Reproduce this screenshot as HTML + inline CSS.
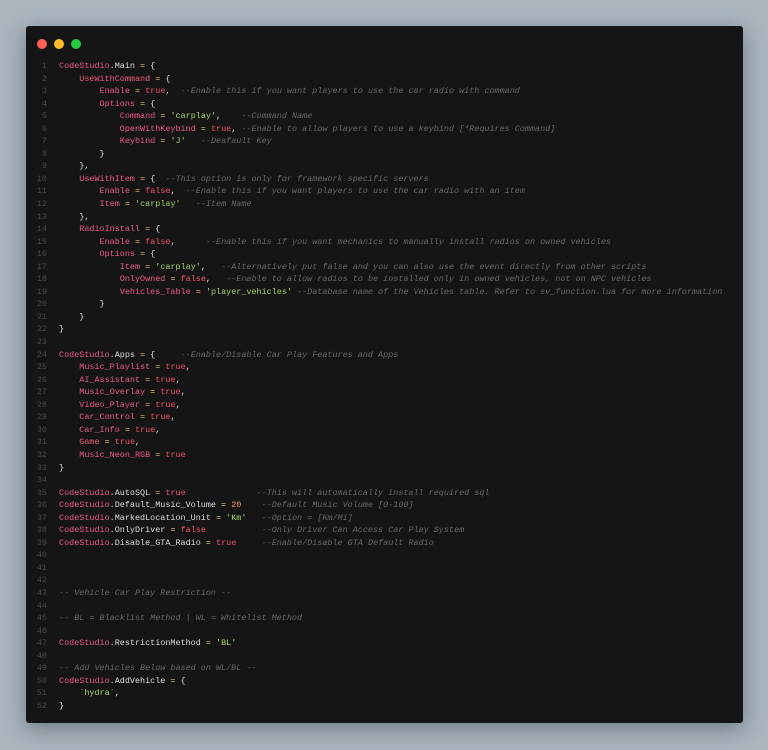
<!DOCTYPE html>
<html><head><meta charset="utf-8"><style>
html,body{margin:0;padding:0;width:768px;height:750px;overflow:hidden;background:#aab5be;}
.win{position:absolute;left:26px;top:26px;width:717px;height:697px;background:#151515;border-radius:3px;box-shadow:0 6px 22px rgba(40,50,60,.45);}
.dot{position:absolute;top:13px;width:10px;height:10px;border-radius:50%;}
pre{position:absolute;left:0;top:34px;margin:0;font-family:"Liberation Mono",monospace;font-size:8.45px;line-height:12.55px;color:#dcdcdc;}
.ln{display:inline-block;width:21px;text-align:right;color:#4a4a4a;margin-right:12px;}
.k{color:#ec5b83}.o{color:#e2bd6e}.b{color:#f0506c}.s{color:#a8d46a}.c{color:#676767;font-style:italic}.n{color:#f5995a}
</style></head><body>
<div class="win">
<div class="dot" style="left:11px;background:#fe5f57"></div>
<div class="dot" style="left:28px;background:#febc2e"></div>
<div class="dot" style="left:45px;background:#28c840"></div>
<pre><span class="ln">1</span><span class="k">CodeStudio</span>.Main <span class="o">=</span> {
<span class="ln">2</span>    <span class="k">UseWithCommand</span> <span class="o">=</span> {
<span class="ln">3</span>        <span class="k">Enable</span> <span class="o">=</span> <span class="b">true</span>,  <span class="c">--Enable this if you want players to use the car radio with command</span>
<span class="ln">4</span>        <span class="k">Options</span> <span class="o">=</span> {
<span class="ln">5</span>            <span class="k">Command</span> <span class="o">=</span> <span class="s">'carplay'</span>,    <span class="c">--Command Name</span>
<span class="ln">6</span>            <span class="k">OpenWithKeybind</span> <span class="o">=</span> <span class="b">true</span>, <span class="c">--Enable to allow players to use a keybind [*Requires Command]</span>
<span class="ln">7</span>            <span class="k">Keybind</span> <span class="o">=</span> <span class="s">'J'</span>   <span class="c">--Deafault Key</span>
<span class="ln">8</span>        }
<span class="ln">9</span>    },
<span class="ln">10</span>    <span class="k">UseWithItem</span> <span class="o">=</span> {  <span class="c">--This option is only for framework specific servers</span>
<span class="ln">11</span>        <span class="k">Enable</span> <span class="o">=</span> <span class="b">false</span>,  <span class="c">--Enable this if you want players to use the car radio with an item</span>
<span class="ln">12</span>        <span class="k">Item</span> <span class="o">=</span> <span class="s">'carplay'</span>   <span class="c">--Item Name</span>
<span class="ln">13</span>    },
<span class="ln">14</span>    <span class="k">RadioInstall</span> <span class="o">=</span> {
<span class="ln">15</span>        <span class="k">Enable</span> <span class="o">=</span> <span class="b">false</span>,      <span class="c">--Enable this if you want mechanics to manually install radios on owned vehicles</span>
<span class="ln">16</span>        <span class="k">Options</span> <span class="o">=</span> {
<span class="ln">17</span>            <span class="k">Item</span> <span class="o">=</span> <span class="s">'carplay'</span>,   <span class="c">--Alternatively put false and you can also use the event directly from other scripts</span>
<span class="ln">18</span>            <span class="k">OnlyOwned</span> <span class="o">=</span> <span class="b">false</span>,   <span class="c">--Enable to allow radios to be installed only in owned vehicles, not on NPC vehicles</span>
<span class="ln">19</span>            <span class="k">Vehicles_Table</span> <span class="o">=</span> <span class="s">'player_vehicles'</span> <span class="c">--Database name of the Vehicles table. Refer to sv_function.lua for more information</span>
<span class="ln">20</span>        }
<span class="ln">21</span>    }
<span class="ln">22</span>}
<span class="ln">23</span>
<span class="ln">24</span><span class="k">CodeStudio</span>.Apps <span class="o">=</span> {     <span class="c">--Enable/Disable Car Play Features and Apps</span>
<span class="ln">25</span>    <span class="k">Music_Playlist</span> <span class="o">=</span> <span class="b">true</span>,
<span class="ln">26</span>    <span class="k">AI_Assistant</span> <span class="o">=</span> <span class="b">true</span>,
<span class="ln">27</span>    <span class="k">Music_Overlay</span> <span class="o">=</span> <span class="b">true</span>,
<span class="ln">28</span>    <span class="k">Video_Player</span> <span class="o">=</span> <span class="b">true</span>,
<span class="ln">29</span>    <span class="k">Car_Control</span> <span class="o">=</span> <span class="b">true</span>,
<span class="ln">30</span>    <span class="k">Car_Info</span> <span class="o">=</span> <span class="b">true</span>,
<span class="ln">31</span>    <span class="k">Game</span> <span class="o">=</span> <span class="b">true</span>,
<span class="ln">32</span>    <span class="k">Music_Neon_RGB</span> <span class="o">=</span> <span class="b">true</span>
<span class="ln">33</span>}
<span class="ln">34</span>
<span class="ln">35</span><span class="k">CodeStudio</span>.AutoSQL <span class="o">=</span> <span class="b">true</span>              <span class="c">--This will automatically install required sql</span>
<span class="ln">36</span><span class="k">CodeStudio</span>.Default_Music_Volume <span class="o">=</span> <span class="n">20</span>    <span class="c">--Default Music Volume [0-100]</span>
<span class="ln">37</span><span class="k">CodeStudio</span>.MarkedLocation_Unit <span class="o">=</span> <span class="s">'Km'</span>   <span class="c">--Option = [Km/Mi]</span>
<span class="ln">38</span><span class="k">CodeStudio</span>.OnlyDriver <span class="o">=</span> <span class="b">false</span>           <span class="c">--Only Driver Can Access Car Play System</span>
<span class="ln">39</span><span class="k">CodeStudio</span>.Disable_GTA_Radio <span class="o">=</span> <span class="b">true</span>     <span class="c">--Enable/Disable GTA Default Radio</span>
<span class="ln">40</span>
<span class="ln">41</span>
<span class="ln">42</span>
<span class="ln">43</span><span class="c">-- Vehicle Car Play Restriction --</span>
<span class="ln">44</span>
<span class="ln">45</span><span class="c">-- BL = Blacklist Method | WL = Whitelist Method</span>
<span class="ln">46</span>
<span class="ln">47</span><span class="k">CodeStudio</span>.RestrictionMethod <span class="o">=</span> <span class="s">'BL'</span>
<span class="ln">48</span>
<span class="ln">49</span><span class="c">-- Add Vehicles Below based on WL/BL --</span>
<span class="ln">50</span><span class="k">CodeStudio</span>.AddVehicle <span class="o">=</span> {
<span class="ln">51</span>    <span class="s">`hydra`</span>,
<span class="ln">52</span>}</pre>
</div>
</body></html>
